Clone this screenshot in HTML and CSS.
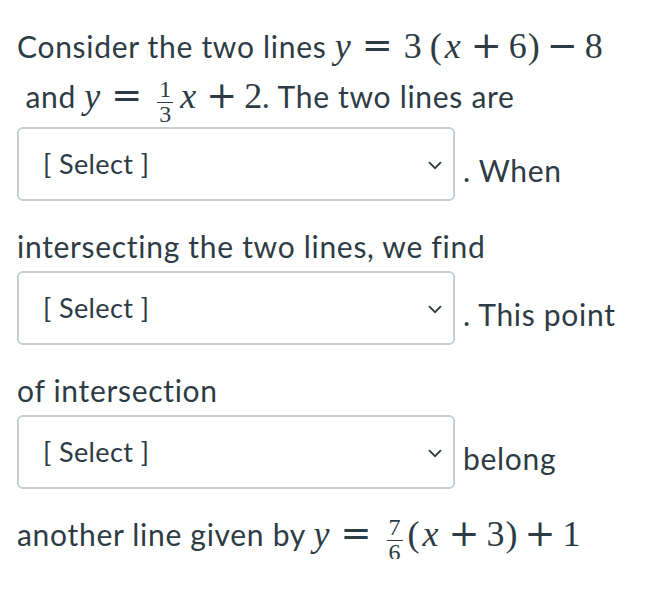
FILE: index.html
```html
<!DOCTYPE html>
<html lang="en">
<head>
<meta charset="utf-8">
<link rel="stylesheet" href="styles.css">
</head>
<body>
<div class="question">
  <div class="line">Consider the two lines <span class="math"><i>y</i><span class="op rel">=</span>3<span class="paren-gap"></span><span class="lp">(</span><i class="x">x</i><span class="op bin">+</span>6<span class="rp">)</span><span class="op bin">−</span>8</span></div>
  <div class="line"> and <span class="math"><i>y</i><span class="op rel">=</span><span class="frac"><span class="num">1</span><span class="den">3</span></span><i class="x">x</i><span class="op bin">+</span>2</span>. The two lines are</div>
  <div class="row first-row">
    <div class="select"><span class="select-text">[ Select ]</span><svg class="chev" width="14" height="9" viewBox="0 0 14 9"><path d="M1 1.2 L7 7.2 L13 1.2" fill="none" stroke="#2d3b45" stroke-width="1.8"/></svg></div>
    <span class="after">. When</span>
  </div>
  <div class="line">intersecting the two lines, we find</div>
  <div class="row">
    <div class="select"><span class="select-text">[ Select ]</span><svg class="chev" width="14" height="9" viewBox="0 0 14 9"><path d="M1 1.2 L7 7.2 L13 1.2" fill="none" stroke="#2d3b45" stroke-width="1.8"/></svg></div>
    <span class="after">. This point</span>
  </div>
  <div class="line">of intersection</div>
  <div class="row">
    <div class="select"><span class="select-text">[ Select ]</span><svg class="chev" width="14" height="9" viewBox="0 0 14 9"><path d="M1 1.2 L7 7.2 L13 1.2" fill="none" stroke="#2d3b45" stroke-width="1.8"/></svg></div>
    <span class="after">belong</span>
  </div>
  <div class="line">another line given by <span class="math"><i>y</i><span class="op rel">=</span><span class="frac"><span class="num">7</span><span class="den">6</span></span><span class="lp">(</span><i class="x">x</i><span class="op bin">+</span>3<span class="rp">)</span><span class="op bin">+</span>1</span></div>
</div>
</body>
</html>
```

FILE: styles.css
```css
html, body {
  margin: 0;
  padding: 0;
  background: #ffffff;
}

.question {
  padding: 21px 0 0 17px;
  font-family: Lato, "Noto Sans", sans-serif;
  font-size: 30px;
  letter-spacing: 0.7px;
  color: #2d3b45;
}

.line {
  height: 50px;
  line-height: 50px;
  white-space: pre;
}

.math {
  font-family: "Liberation Serif", "DejaVu Serif", serif;
  font-size: 36px;
  letter-spacing: 0;
  line-height: 1;
}

.math i {
  font-style: italic;
}

.math .x {
  margin: 0 3px 0 2px;
}

.lp {
  margin-right: 1px;
}

.rp {
  margin-left: 1px;
}

.op {
  display: inline-block;
  font-family: "DejaVu Serif", serif;
  font-size: 37px;
  text-align: center;
}

.rel {
  width: 53px;
}

.bin {
  margin: 0 7px;
}

.paren-gap {
  display: inline-block;
  width: 8px;
}

.frac {
  display: inline-block;
  vertical-align: -14px;
  text-align: center;
  font-size: 24px;
  margin: 0 5px 0 4px;
}

.num {
  display: block;
  line-height: 20px;
  padding: 0 2px 3px;
  border-bottom: 1.5px solid #2d3b45;
}

.den {
  display: block;
  line-height: 20px;
  padding-top: 1px;
}

.row {
  display: flex;
  align-items: flex-start;
  margin: 0 0 20px;
}

.first-row {
  margin-top: 6px;
}

.select {
  box-sizing: border-box;
  width: 438px;
  height: 74px;
  border: 2px solid #c7cdd1;
  border-radius: 6px;
  display: flex;
  align-items: center;
  padding: 0 11px 0 24px;
  font-size: 27px;
  letter-spacing: 0.4px;
  line-height: 1.2;
}

.select-text {
  flex: 1;
}

.chev {
  margin-top: 3px;
}

.after {
  line-height: 50px;
  margin: 18px 0 0 8px;
}
```
